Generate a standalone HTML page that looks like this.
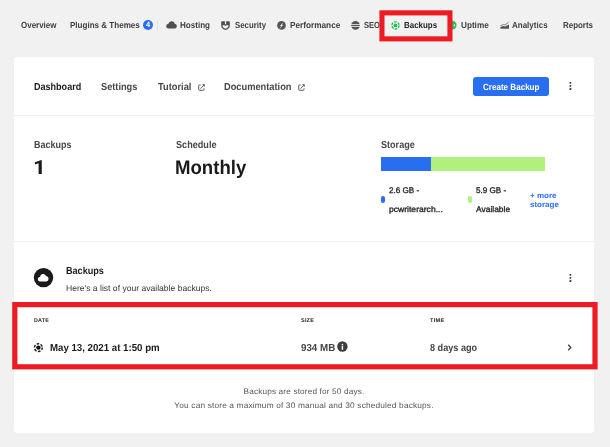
<!DOCTYPE html>
<html><head><meta charset="utf-8">
<style>
*{box-sizing:border-box;margin:0;padding:0}
html,body{width:610px;height:447px;overflow:hidden;background:#f1f1f1;font-family:"Liberation Sans",sans-serif;color:#333}
.a{position:absolute;white-space:nowrap}
.k{transform-origin:0 50%}
.ft.k{transform-origin:50% 50%}
.nav{font-size:8.800px;font-weight:bold;color:#414141;top:19.700px;line-height:10px}
.card{position:absolute;left:14px;top:57px;width:580px;height:376px;background:#fff;border-radius:3px}
.hr{position:absolute;left:14px;width:580px;height:1px;background:#f0f0f0}
.tab{font-size:10.200px;font-weight:bold;color:#464646;top:81.5px;line-height:12px}
.lbl{font-size:10.200px;font-weight:bold;color:#464646;line-height:12px;top:140.0px}
.big{font-size:19.600px;font-weight:bold;color:#1a1a1a;line-height:22px;top:156.6px}
.sm{font-size:8.200px;color:#222;line-height:10px;-webkit-text-stroke:.3px #222}
.th{font-size:5.500px;font-weight:bold;color:#222;letter-spacing:.2px;top:318.0px;line-height:7px}
.td{font-size:10.200px;font-weight:bold;color:#444;top:343.3px;line-height:12px}
.ft{font-size:8.100px;letter-spacing:.15px;color:#555;line-height:10px;left:14px;width:580px;text-align:center}
#w{position:absolute;left:0;top:0;width:610px;height:447px;will-change:transform;text-rendering:geometricPrecision}
</style></head><body><div id="w">
<!-- nav -->
<div class="a k nav" id="n1" style="left:21px;transform:scaleX(0.907)">Overview</div>
<div class="a k nav" id="n2" style="left:69.600px;transform:scaleX(0.915)">Plugins &amp; Themes</div>
<div class="a" style="left:143px;top:20px;width:10px;height:10px;border-radius:50%;background:#286ef1;color:#fff;font-size:7.500px;font-weight:bold;text-align:center;line-height:10.500px">4</div>
<div class="a" style="left:157px;top:20px;width:1px;height:10px;background:#e2e2e2"></div>
<svg class="a" style="left:165.800px;top:21px" width="12" height="8" viewBox="0 0 12 8"><path d="M2.600 7.400a2.300 2.300 0 0 1-.2-4.600A3.300 3.300 0 0 1 8.800 2.700a2.400 2.400 0 0 1 .3 4.700z" fill="#505050"/></svg>
<div class="a k nav" id="n3" style="left:180.200px;transform:scaleX(0.916)">Hosting</div>
<svg class="a" style="left:221.100px;top:20.800px" width="9" height="10" viewBox="0 0 9 10"><path d="M1 .3H3.900V3.300H5.100V.3H8Q8.800 .3 8.800 1.100V5C8.800 7 6.600 8.500 4.500 9.100 2.400 8.500 .2 7 .2 5V1.100Q.2 .3 1 .3z" fill="#505050"/><path d="M1.600 4.200H3.600L4.500 5 5.400 4.200H7.400V5.300C7.400 6.500 5.800 7.300 4.500 7.700 3.200 7.300 1.600 6.500 1.600 5.300z" fill="#f1f1f1"/></svg>
<div class="a k nav" id="n4" style="left:234.700px;transform:scaleX(0.893)">Security</div>
<svg class="a" style="left:277px;top:21px" width="9" height="9" viewBox="0 0 9 9"><circle cx="4.500" cy="4.400" r="4.300" fill="#555"/><path d="M6.200 1.300L3 4.900H4.200L2.100 8.400 6.200 3.700H4.900z" fill="#f1f1f1"/></svg>
<div class="a k nav" id="n5" style="left:290.200px;transform:scaleX(0.935)">Performance</div>
<svg class="a" style="left:351px;top:21px" width="9" height="9" viewBox="0 0 9 9"><circle cx="4.500" cy="4.400" r="4.300" fill="#555"/><rect x="0" y="3.100" width="9" height=".8" fill="#f1f1f1"/><rect x="0" y="5" width="9" height=".8" fill="#f1f1f1"/></svg>
<div class="a k nav" id="n6" style="left:363.800px;transform:scaleX(0.861)">SEO</div>
<!-- red box around Backups -->
<svg class="a" style="left:448px;top:19px" width="12" height="12" viewBox="0 0 12 12"><circle cx="4.200" cy="6.100" r="4.350" fill="#22c04f"/><path d="M5.100 6.300L7 5.100V7.500z" fill="#f1f1f1"/></svg>
<svg class="a" style="left:370px;top:0" width="100" height="50"><rect x="11.950" y="12.850" width="68" height="26" fill="none" stroke="#ed1c24" stroke-width="5.100"/></svg>
<svg class="a" style="left:391px;top:21px" width="9" height="9" viewBox="0 0 9 9"><circle cx="4.500" cy="4.400" r="3.600" fill="none" stroke="#22c04f" stroke-width="1.300" stroke-dasharray="2.600 1.170"/><circle cx="4.500" cy="4.400" r="1.900" fill="#22c04f"/></svg>
<div class="a k nav" id="n7" style="left:404px;color:#222;transform:scaleX(0.903)">Backups</div>
<div class="a k nav" id="n8" style="left:461px;transform:scaleX(0.929)">Uptime</div>
<svg class="a" style="left:499.500px;top:21px" width="10" height="9" viewBox="0 0 10 9"><path d="M.4 7.800V6.100L3.300 5l1.700.4L9 3.400v4.400z" fill="#555"/><path d="M.4 4.700L3.300 3.600l1.700.4L8.600 1.200" fill="none" stroke="#666" stroke-width=".8"/></svg>
<div class="a k nav" id="n9" style="left:512.200px;transform:scaleX(0.910)">Analytics</div>
<div class="a k nav" id="n10" style="left:563px;transform:scaleX(0.902)">Reports</div>

<!-- card -->
<div class="card"></div>
<div class="a k tab" id="t1" style="left:34.100px;color:#1a1a1a;transform:scaleX(0.887)">Dashboard</div>
<div class="a k tab" id="t2" style="left:101.200px;transform:scaleX(0.905)">Settings</div>
<div class="a k tab" id="t3" style="left:157.800px;transform:scaleX(0.912)">Tutorial</div>
<svg class="a" style="left:198px;top:84px" width="7" height="7" viewBox="0 0 7 7"><path d="M2.800 1H1.500Q.7 1 .7 1.800V5.500Q.7 6.300 1.500 6.300H5.200Q6 6.300 6 5.500V4.300M4.400 .7H6.300V2.600M6.200 .8L2.500 4.700" fill="none" stroke="#5a5a5a" stroke-width="1"/></svg>
<div class="a k tab" id="t4" style="left:224.100px;transform:scaleX(0.910)">Documentation</div>
<svg class="a" style="left:298px;top:84px" width="7" height="7" viewBox="0 0 7 7"><path d="M2.800 1H1.500Q.7 1 .7 1.800V5.500Q.7 6.300 1.500 6.300H5.200Q6 6.300 6 5.500V4.300M4.400 .7H6.300V2.600M6.200 .8L2.500 4.700" fill="none" stroke="#5a5a5a" stroke-width="1"/></svg>
<div class="a" style="left:473px;top:77px;width:76px;height:19px;border-radius:3px;background:#286ef1"></div>
<div class="a k" id="btn" style="left:482.500px;top:82.3px;color:#fff;font-size:9px;font-weight:bold;line-height:10px;transform:scaleX(0.896)">Create Backup</div>
<svg class="a" style="left:565px;top:80px" width="10" height="12" viewBox="0 0 10 12"><g fill="#3c3c3c"><rect x="4.500" y="2.050" width="1.800" height="1.800" rx=".5"/><rect x="4.500" y="5.050" width="1.800" height="1.800" rx=".5"/><rect x="4.500" y="8.100" width="1.800" height="1.800" rx=".5"/></g></svg>
<div class="hr" style="top:115px"></div>

<div class="a k lbl" id="l1" style="left:34.400px;transform:scaleX(0.881)">Backups</div>
<svg class="a" style="left:30px;top:155px" width="16" height="24" viewBox="0 0 16 24"><path d="M11.750 4.900V18.900H8.600V8.300L4.900 9.500V7.300L11.350 4.900z" fill="#1a1a1a"/></svg>
<div class="a k lbl" id="l2" style="left:175.700px;transform:scaleX(0.894)">Schedule</div>
<div class="a k big" id="b2" style="left:174.600px;transform:scaleX(0.949)">Monthly</div>
<div class="a k lbl" id="l3" style="left:381.200px;transform:scaleX(0.891)">Storage</div>
<div class="a" style="left:381px;top:157px;width:50px;height:14px;background:#286ef1"></div>
<div class="a" style="left:431px;top:157px;width:114px;height:14px;background:#b0f07c"></div>
<div class="a" style="left:381px;top:196px;width:4px;height:7px;border-radius:2px;background:#286ef1"></div>
<div class="a k sm" id="s1" style="left:389px;top:186.1px;transform:scaleX(0.990)">2.6 GB -</div>
<div class="a k sm" id="s2" style="left:389px;top:205.2px;transform:scaleX(1.046)">pcwriterarch...</div>
<div class="a" style="left:468px;top:196px;width:4px;height:7px;border-radius:2px;background:#b0f07c"></div>
<div class="a k sm" id="s3" style="left:476px;top:186.1px;transform:scaleX(0.990)">5.9 GB -</div>
<div class="a k sm" id="s4" style="left:476px;top:205.2px;transform:scaleX(1.031)">Available</div>
<div class="a k sm" id="s5" style="left:530px;top:190.7px;-webkit-text-stroke:0;font-size:7.800px;color:#286ef1;font-weight:bold;line-height:9px;transform:scaleX(1.026)">+ more<br>storage</div>
<div class="hr" style="top:241px"></div>

<!-- backups list header -->
<svg class="a" style="left:33px;top:267px" width="21" height="21" viewBox="0 0 21 21"><circle cx="10.500" cy="10.600" r="9.700" fill="#1a1a1a"/><path d="M7.300 14.600a2.400 2.400 0 0 1-.2-4.800 3.100 3.100 0 0 1 5.900-.9 2.900 2.900 0 0 1 .4 5.700z" fill="#fff"/></svg>
<div class="a k" id="h1" style="left:66.200px;top:266.3px;font-size:10.200px;font-weight:bold;color:#1a1a1a;line-height:12px;transform:scaleX(0.892)">Backups</div>
<div class="a k" id="h2" style="left:66.200px;top:283.1px;font-size:8.500px;color:#333;line-height:10px;transform:scaleX(1.008)">Here's a list of your available backups.</div>
<svg class="a" style="left:565px;top:272px" width="10" height="12" viewBox="0 0 10 12"><g fill="#3c3c3c"><rect x="4.500" y="2.050" width="1.800" height="1.800" rx=".5"/><rect x="4.500" y="5.050" width="1.800" height="1.800" rx=".5"/><rect x="4.500" y="8.100" width="1.800" height="1.800" rx=".5"/></g></svg>

<!-- red row box -->
<svg class="a" style="left:0;top:290px" width="610" height="90"><rect x="14.800" y="14.600" width="580.200" height="62.200" fill="none" stroke="#ed1c24" stroke-width="5.200"/></svg>
<div class="a k th" id="th1" style="left:34px;transform:scaleX(0.976)">DATE</div>
<div class="a k th" id="th2" style="left:300.800px;transform:scaleX(1.005)">SIZE</div>
<div class="a k th" id="th3" style="left:429.700px;transform:scaleX(1.032)">TIME</div>
<svg class="a" style="left:33px;top:342px" width="11" height="11" viewBox="0 0 11 11"><circle cx="5.400" cy="5.600" r="3.900" fill="none" stroke="#222" stroke-width="1.500" stroke-dasharray="2.700 1.384" stroke-dashoffset=".3"/><circle cx="5.400" cy="5.600" r="2.200" fill="#111"/></svg>
<div class="a k td" id="d1" style="left:50.400px;color:#1a1a1a;transform:scaleX(0.949)">May 13, 2021 at 1:50 pm</div>
<div class="a k td" id="d2" style="left:301px;transform:scaleX(0.959)">934 MB</div>
<svg class="a" style="left:337px;top:341px" width="11" height="11" viewBox="0 0 11 11"><circle cx="5.400" cy="5.500" r="5.200" fill="#3d3d3d"/><rect x="4.650" y="4.900" width="1.500" height="3.800" fill="#fff"/><circle cx="5.400" cy="3.500" r=".85" fill="#fff"/></svg>
<div class="a k td" id="d3" style="left:430px;transform:scaleX(0.896)">8 days ago</div>
<svg class="a" style="left:567px;top:344px" width="5" height="7" viewBox="0 0 5 7"><path d="M1.200 .8L3.800 3.500 1.200 6.200" fill="none" stroke="#3a3a3a" stroke-width="1.250"/></svg>

<div class="a k ft" id="f1" style="top:386.6px;transform:scaleX(1.016)">Backups are stored for 50 days.</div>
<div class="a k ft" id="f2" style="top:400.8px;transform:scaleX(1.027)">You can store a maximum of 30 manual and 30 scheduled backups.</div>
</div></body></html>
